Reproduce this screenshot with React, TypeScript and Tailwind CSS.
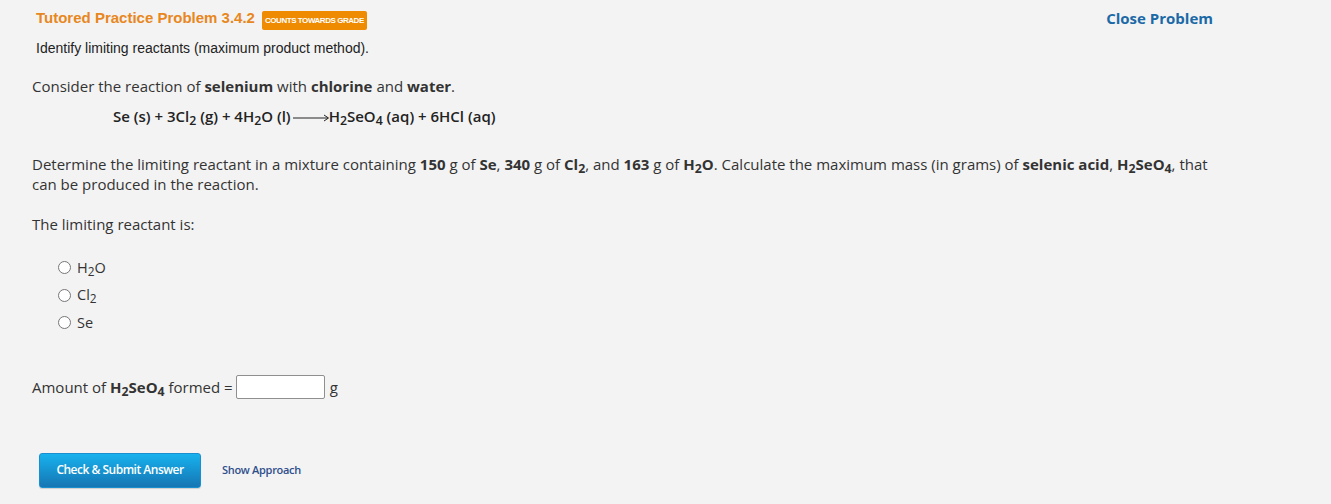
const Sub = ({ children }: { children: React.ReactNode }) => (
  <sub className="relative top-[3px] align-baseline text-[0.82em] leading-none">{children}</sub>
);

function Radio({ children }: { children: React.ReactNode }) {
  return (
    <label className="flex h-[27.5px] items-center gap-[6px]">
      <span className="h-[13px] w-[13px] rounded-full border border-[#767676] bg-white" />
      <span>{children}</span>
    </label>
  );
}

export default function App() {
  return (
    <div className="min-h-[504px] w-[1331px] bg-[#f3f3f3] text-[15px] text-[#333] [font-family:'Open_Sans',sans-serif]">
      {/* Header */}
      <div className="flex items-start justify-between pl-[36px] pr-[118px] pt-[7px]">
        <div>
          <div className="flex items-center gap-[7px]">
            <h1 className="text-[15px] font-bold text-[#e8871e] [font-family:'Liberation_Sans',Arial,sans-serif]">
              Tutored Practice Problem 3.4.2
            </h1>
            <span className="mt-[4px] flex h-[19px] items-center rounded-[2px] bg-[#ef8b00] px-[3px] text-[8px] leading-none font-bold tracking-[-0.45px] text-white [font-family:'Liberation_Sans',Arial,sans-serif]">
              COUNTS TOWARDS GRADE
            </span>
          </div>
          <p className="mt-[8px] text-[14px] text-[#222] [font-family:'Liberation_Sans',Arial,sans-serif]">
            Identify limiting reactants (maximum product method).
          </p>
        </div>
        <a className="text-[15px] font-bold text-[#1b69a6]">Close Problem</a>
      </div>

      {/* Body */}
      <div className="mt-[17px] w-[1230px] pl-[32px] leading-[20px]">
        <p>
          Consider the reaction of <b>selenium</b> with <b>chlorine</b> and <b>water</b>.
        </p>
        <p className="mt-[10px] pl-[81px] text-[15px] font-semibold text-[#222]">
          Se (s) + 3Cl<Sub>2</Sub> (g) + 4H<Sub>2</Sub>O (l)
          <span className="ml-[2px] inline-block align-middle">
            <svg width="36" height="8" viewBox="0 0 36 8">
              <line x1="0" y1="4" x2="35" y2="4" stroke="#222" strokeWidth="1" />
              <path d="M31 1 L35.5 4 L31 7" fill="none" stroke="#222" strokeWidth="1" />
            </svg>
          </span>
          H<Sub>2</Sub>SeO<Sub>4</Sub> (aq) + 6HCl (aq)
        </p>

        <p className="mt-[28px]">
          Determine the limiting reactant in a mixture containing <b>150</b> g of <b>Se</b>, <b>340</b> g of{' '}
          <b>
            Cl<Sub>2</Sub>
          </b>
          , and <b>163</b> g of{' '}
          <b>
            H<Sub>2</Sub>O
          </b>
          . Calculate the maximum mass (in grams) of <b>selenic acid</b>,{' '}
          <b>
            H<Sub>2</Sub>SeO<Sub>4</Sub>
          </b>
          , that can be produced in the reaction.
        </p>

        <p className="mt-[20px]">The limiting reactant is:</p>

        <div className="mt-[20px] pl-[26px] text-[14.5px]">
          <Radio>
            H<Sub>2</Sub>O
          </Radio>
          <Radio>
            Cl<Sub>2</Sub>
          </Radio>
          <Radio>Se</Radio>
        </div>

        <div className="mt-[38px] flex items-center">
          <span>
            Amount of{' '}
            <b>
              H<Sub>2</Sub>SeO<Sub>4</Sub>
            </b>{' '}
            formed =
          </span>
          <input
            type="text"
            className="ml-[3px] h-[24px] w-[89px] rounded-[2px] border border-[#8f8f8f] bg-white"
          />
          <span className="ml-[5px]">g</span>
        </div>

        <div className="mt-[54px] flex items-center gap-[21px] pl-[7px]">
          <button className="h-[35px] w-[162px] rounded-[3px] border border-[#1a8fcf] bg-gradient-to-b from-[#17b2ee] to-[#1576b3] text-[12px] font-semibold tracking-[-0.5px] text-white shadow-[0_1px_1px_rgba(0,0,0,0.15)]">
            Check &amp; Submit Answer
          </button>
          <a className="text-[11px] font-semibold tracking-[-0.3px] text-[#2f4f8c]">Show Approach</a>
        </div>
      </div>
    </div>
  );
}
